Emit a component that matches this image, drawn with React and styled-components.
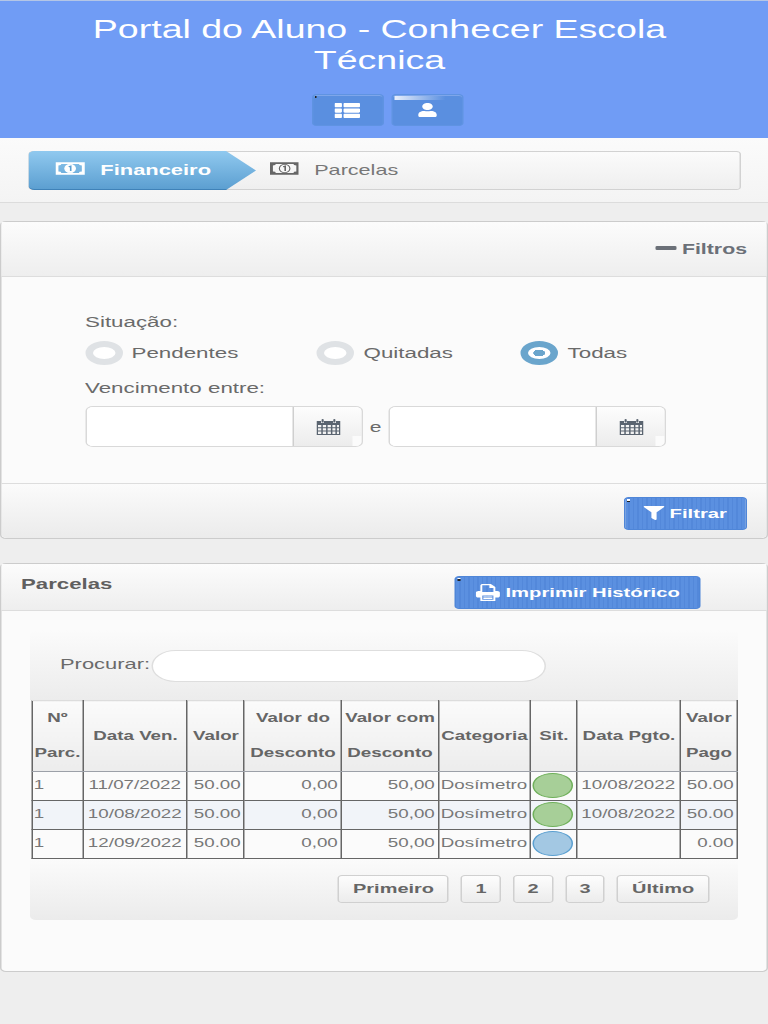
import React from "react";
import styled, { createGlobalStyle } from "styled-components";
import { FaThList, FaUser, FaFilter } from "react-icons/fa";

const rows = [
  { venc: "11/07/2022", sit: "paid", pgto: "10/08/2022", pago: "50.00" },
  { venc: "10/08/2022", sit: "paid", pgto: "10/08/2022", pago: "50.00" },
  { venc: "12/09/2022", sit: "open", pgto: "", pago: "0.00" },
];

const colWidths = [34.7, 69.3, 38, 64.7, 64.7, 61.3, 31.3, 68.7, 38];

const MoneyIcon = ({ color, face, digit }) => (
  <MoneySvg viewBox="0 0 20 13">
    <path
      fill={color}
      fillRule="evenodd"
      d="M0 0h20v13H0z M4 2 Q4 3.500 2 3.500 V9.500 Q4 9.500 4 11 H16 Q16 9.500 18 9.500 V3.500 Q16 3.500 16 2z"
    />
    <ellipse cx="10" cy="6.500" rx="3.600" ry="4.200" fill={face} stroke={color} strokeWidth="0.8" />
    <path d="M9 4.800 L10.400 4.100 V9" stroke={digit} strokeWidth="1.100" fill="none" />
  </MoneySvg>
);

const CalendarIcon = () => (
  <CalSvg viewBox="0 0 16 16">
    <path
      fill="#5a6470"
      fillRule="evenodd"
      d="M0 2h3v2h2V2h6v2h2V2h3v14H0z M1 6v2.200h2.200V6z M4.200 6v2.200h2.200V6z M7.400 6v2.200h2.200V6z M10.600 6v2.200h2V6z M13.600 6v2.200H15V6z M1 9.200v2.200h2.200V9.200z M4.200 9.200v2.200h2.200V9.200z M7.400 9.200v2.200h2.200V9.200z M10.600 9.200v2.200h2V9.200z M13.600 9.200v2.200H15V9.200z M1 12.400V15h2.200v-2.600z M4.200 12.400V15h2.200v-2.600z M7.400 12.400V15h2.200v-2.600z M10.600 12.400V15h2v-2.600z M13.600 12.400V15H15v-2.600z"
    />
    <rect x="3.400" y="0" width="1.400" height="3.600" rx="0.700" fill="#5a6470" />
    <rect x="11.200" y="0" width="1.400" height="3.600" rx="0.700" fill="#5a6470" />
  </CalSvg>
);

const PrinterIcon = () => (
  <PrintSvg viewBox="0 0 16 17">
    <path
      fill="#fff"
      fillRule="evenodd"
      d="M3 7V1.500C3 .7 3.700 0 4.500 0H10l3 3v4h1.200C15.200 7 16 7.800 16 8.800V12c0 .8-.7 1.500-1.500 1.500H13V17H3v-3.500H1.500C.7 13.500 0 12.800 0 12V8.800C0 7.800.8 7 1.800 7z M4.300 1.300V8H11.700V4H9V1.300z M4.300 11.500V15.700H11.700V11.500z"
    />
    <path d="M5 13h6M5 14.500h6" stroke="#fff" strokeWidth="0.8" />
  </PrintSvg>
);

const Radio = ({ label, checked, width }) => (
  <RadioItem $width={width}>
    <RadioMark $checked={checked} />
    <span>{label}</span>
  </RadioItem>
);

const DateInput = () => (
  <InputGroup>
    <DateField />
    <Addon>
      <CalendarIcon />
    </Addon>
  </InputGroup>
);

export default function App() {
  return (
    <Page>
      <GlobalStyle />
      <Canvas>
        <Header>
          <Title>Portal do Aluno - Conhecer Escola Técnica</Title>
          <HeaderButtons>
            <HeaderButton>
              <FaThList size={17} />
            </HeaderButton>
            <HeaderButton $strip>
              <FaUser size={14} />
            </HeaderButton>
          </HeaderButtons>
        </Header>

        <CrumbBar>
          <Crumbs>
            <ActiveCrumb>
              <MoneyIcon color="#fff" face="#fff" digit="#5c9fd1" />
              Financeiro
            </ActiveCrumb>
            <Crumb>
              <MoneyIcon color="#666" face="#f7f7f7" digit="#666" />
              Parcelas
            </Crumb>
          </Crumbs>
        </CrumbBar>

        <FilterPanel>
          <FilterHead>
            <Dash />
            Filtros
          </FilterHead>
          <FilterBody>
            <FieldLabel>Situação:</FieldLabel>
            <RadioRow>
              <Radio label="Pendentes" width={154.7} />
              <Radio label="Quitadas" width={136} />
              <Radio label="Todas" checked />
            </RadioRow>
            <DateLabel>Vencimento entre:</DateLabel>
            <DateRow>
              <DateInput />
              <Between>e</Between>
              <DateInput />
            </DateRow>
          </FilterBody>
          <FilterFoot>
            <BlueButton $width={82}>
              <FaFilter size={14} />
              Filtrar
            </BlueButton>
          </FilterFoot>
        </FilterPanel>

        <ListPanel>
          <ListHead>
            <ListTitle>Parcelas</ListTitle>
            <BlueButton $width={164}>
              <PrinterIcon />
              Imprimir Histórico
            </BlueButton>
          </ListHead>
          <ListBody>
            <SearchBar>
              <SearchLabel>Procurar:</SearchLabel>
              <SearchInput />
            </SearchBar>
            <Table>
              <colgroup>
                {colWidths.map((w, i) => (
                  <col key={i} style={{ width: w }} />
                ))}
              </colgroup>
              <thead>
                <tr>
                  <Th>Nº<br />Parc.</Th>
                  <Th>Data Ven.</Th>
                  <Th>Valor</Th>
                  <Th>Valor do<br />Desconto</Th>
                  <Th>Valor com<br />Desconto</Th>
                  <Th>Categoria</Th>
                  <Th>Sit.</Th>
                  <Th>Data Pgto.</Th>
                  <Th>Valor<br />Pago</Th>
                </tr>
              </thead>
              <tbody>
                {rows.map((r, i) => (
                  <Row key={i} $alt={i === 1}>
                    <Td>1</Td>
                    <Td $align="center">{r.venc}</Td>
                    <Td $align="right">50.00</Td>
                    <Td $align="right">0,00</Td>
                    <Td $align="right">50,00</Td>
                    <Td>Dosímetro</Td>
                    <Td $align="center">
                      <Status $sit={r.sit} />
                    </Td>
                    <Td $align="center">{r.pgto}</Td>
                    <Td $align="right">{r.pago}</Td>
                  </Row>
                ))}
              </tbody>
            </Table>
            <Pager>
              <PageButton $width={74}>Primeiro</PageButton>
              <PageButton $width={26.7}>1</PageButton>
              <PageButton $width={26.7}>2</PageButton>
              <PageButton $width={26.7}>3</PageButton>
              <PageButton $width={61.3}>Último</PageButton>
            </Pager>
          </ListBody>
        </ListPanel>
      </Canvas>
    </Page>
  );
}

const GlobalStyle = createGlobalStyle`
  html, body {
    margin: 0;
    padding: 0;
    background: #eeeeee;
    overflow: hidden;
  }
  * {
    box-sizing: border-box;
  }
`;

const Page = styled.div`
  width: 768px;
  height: 1024px;
  overflow: hidden;
  background: #eeeeee;
`;

/* the whole page is photographed stretched sideways, so everything in here is 512 wide */
const Canvas = styled.div`
  width: 512px;
  transform: scale(1.5, 1);
  transform-origin: 0 0;
  font-family: "Liberation Sans", Arial, sans-serif;
  color: #666;
`;

const Header = styled.header`
  height: 138px;
  padding-top: 13px;
  background: #709cf5;
  border-top: 1px solid #b4c6e6;
  text-align: center;
`;

const Title = styled.h1`
  margin: 0 auto;
  width: 420px;
  padding-right: 6px;
  font-size: 25px;
  line-height: 31px;
  font-weight: 400;
  color: #fff;
`;

const HeaderButtons = styled.div`
  display: flex;
  justify-content: center;
  gap: 5px;
  margin-top: 18px;
  padding-left: 4px;
`;

const HeaderButton = styled.button`
  position: relative;
  display: flex;
  align-items: center;
  justify-content: center;
  width: 48px;
  height: 32px;
  padding: 0;
  border: 1px solid #5f93e2;
  border-radius: 3px;
  background: #5a8fe0;
  box-shadow: inset 0 1px 0 #7ea6ea;
  color: #fff;
  &::before {
    content: "";
    position: absolute;
    top: 1px;
    left: 1px;
    width: ${(p) => (p.$strip ? "34px" : "1px")};
    height: ${(p) => (p.$strip ? "4px" : "2px")};
    background: ${(p) =>
      p.$strip ? "linear-gradient(90deg, #e8effb, #5a8fe0)" : "#222"};
  }
`;

const CrumbBar = styled.div`
  height: 65px;
  padding: 13px 18.7px 0;
  background: linear-gradient(#fbfbfb, #f4f4f4);
  border-bottom: 1px solid #dcdcdc;
`;

const Crumbs = styled.div`
  display: flex;
  align-items: center;
  width: 475px;
  height: 39px;
  background: linear-gradient(#fbfbfb, #efefef);
  border: 1px solid #d2d2d2;
  border-radius: 3px;
  font-size: 14.4px;
`;

const ActiveCrumb = styled.div`
  display: flex;
  align-items: center;
  gap: 10px;
  width: 152px;
  height: 39px;
  margin: -1px 0 -1px -1px;
  padding-left: 18.7px;
  background: linear-gradient(#90c9ef, #5c9fd1);
  border-bottom: 1px solid #3f82b8;
  border-radius: 4px 0 0 4px;
  clip-path: polygon(0 0, 132px 0, 100% 50%, 132px 100%, 0 100%);
  color: #fff;
  font-size: 14.6px;
  font-weight: 700;
`;

const Crumb = styled.div`
  display: flex;
  align-items: center;
  gap: 10px;
  margin-top: -1px;
  padding-left: 9.300px;
  color: #777;
`;

const MoneySvg = styled.svg`
  width: 19.500px;
  height: 13px;
  margin-top: -3px;
`;

const Panel = styled.section`
  background: #fbfbfb;
  border: 1px solid #cccccc;
  border-radius: 4px;
`;

const FilterPanel = styled(Panel)`
  height: 318px;
  margin-top: 18px;
`;

const FilterHead = styled.div`
  display: flex;
  align-items: center;
  justify-content: flex-end;
  gap: 4px;
  height: 55px;
  padding: 0 13px 0 0;
  background: linear-gradient(#fcfcfc, #eeeeee);
  border-bottom: 1px solid #dddddd;
  font-size: 14.2px;
  font-weight: 700;
  color: #6b7078;
`;

const Dash = styled.span`
  width: 13.500px;
  height: 4px;
  margin-top: -2px;
  background: #6b7078;
  border-radius: 1px;
`;

const FilterBody = styled.div`
  height: 206px;
  padding: 34px 0 0 55.700px;
  font-size: 14.900px;
  color: #6a6a6a;
`;

const FieldLabel = styled.div`
  line-height: 22px;
`;

const RadioRow = styled.div`
  display: flex;
  margin-top: 8px;
`;

const RadioItem = styled.label`
  display: flex;
  align-items: center;
  gap: 6px;
  width: ${(p) => (p.$width ? `${p.$width}px` : "auto")};
  height: 24px;
`;

const RadioMark = styled.span`
  display: block;
  width: 25px;
  height: 24px;
  border-style: solid;
  border-width: 6px 5px;
  border-color: ${(p) => (p.$checked ? "#6aa5cc" : "#dfe2e5")};
  border-radius: 50%;
  background: ${(p) =>
    p.$checked
      ? "radial-gradient(ellipse 4px 3.500px, #6aa5cc 0 96%, #fff 100%)"
      : "#fff"};
`;

const DateLabel = styled(FieldLabel)`
  margin-top: 12px;
`;

const DateRow = styled.div`
  display: flex;
  align-items: center;
  margin-top: 7px;
`;

const InputGroup = styled.div`
  display: flex;
  width: 185.300px;
  height: 41px;
  background: #fff;
  border: 1px solid #d9d9d9;
  border-radius: 5px;
  overflow: hidden;
`;

const DateField = styled.input`
  flex: 1;
  min-width: 0;
  border: 0;
  outline: 0;
  background: #fff;
`;

const Addon = styled.div`
  position: relative;
  display: flex;
  align-items: center;
  justify-content: center;
  width: 45.700px;
  background: linear-gradient(#fdfdfd, #ececec);
  border-left: 1px solid #cfcfcf;
  &::after {
    content: "";
    position: absolute;
    right: 0;
    bottom: 0;
    width: 6px;
    height: 10px;
    background: #fbfbfb;
  }
`;

const CalSvg = styled.svg`
  width: 16px;
  height: 16px;
`;

const Between = styled.span`
  width: 16.700px;
  text-align: center;
  font-size: 14px;
`;

const FilterFoot = styled.div`
  display: flex;
  justify-content: flex-end;
  height: 55px;
  padding: 13px 13px 0 0;
  background: linear-gradient(#fbfbfb, #ebebeb);
  border-top: 1px solid #dddddd;
  border-radius: 0 0 4px 4px;
`;

const BlueButton = styled.button`
  position: relative;
  display: flex;
  align-items: center;
  justify-content: center;
  gap: 3px;
  flex: none;
  width: ${(p) => p.$width}px;
  height: 33px;
  padding: 0 0 1px;
  background: repeating-linear-gradient(90deg, #5b90e0 0 2px, #5388da 2px 3px);
  border: 1px solid #4f86d8;
  border-radius: 3px;
  color: #fff;
  font-family: inherit;
  font-size: 13.500px;
  font-weight: 700;
  &::before {
    content: "";
    position: absolute;
    top: 1px;
    left: 1px;
    width: 2px;
    height: 3px;
    background: linear-gradient(#fff 50%, #222 50%);
  }
`;

const PrintSvg = styled.svg`
  width: 16.500px;
  height: 17px;
`;

const ListPanel = styled(Panel)`
  height: 409px;
  margin-top: 24px;
`;

const ListHead = styled.div`
  display: flex;
  align-items: flex-start;
  justify-content: space-between;
  height: 47px;
  padding: 12px 43.700px 0 13px;
  background: linear-gradient(#fcfcfc, #eeeeee);
  border-bottom: 1px solid #dddddd;
`;

const ListTitle = styled.h2`
  margin: -1px 0 0;
  font-size: 14.800px;
  line-height: 18px;
  font-weight: 700;
  color: #5f5f5f;
`;

const ListBody = styled.div`
  padding: 19px 0 0 19px;
`;

const SearchBar = styled.div`
  display: flex;
  align-items: center;
  width: 472px;
  height: 70px;
  padding: 2px 0 0 20px;
  background: linear-gradient(#fbfbfb, #ececec);
  border-radius: 4px 4px 0 0;
`;

const SearchLabel = styled.label`
  width: 60.500px;
  margin-top: -4px;
  font-size: 14.600px;
  color: #6a6a6a;
`;

const SearchInput = styled.input`
  width: 263px;
  height: 32px;
  background: #fff;
  border: 1px solid #dedede;
  border-radius: 16px;
  outline: 0;
`;

const Table = styled.table`
  width: 471px;
  margin-left: 0.500px;
  border-collapse: collapse;
  table-layout: fixed;
  font-size: 12.500px;
`;

const Th = styled.th`
  height: 69px;
  padding: 0;
  background: linear-gradient(#fbfbfb, #ececec);
  border: 1px solid #666;
  border-top-color: #dddddd;
  border-bottom-color: #9ca0a8;
  line-height: 35px;
  font-weight: 700;
  color: #666;
  white-space: nowrap;
`;

const Row = styled.tr`
  background: ${(p) => (p.$alt ? "#f1f4f9" : "#fbfbfb")};
`;

const Td = styled.td`
  height: 29px;
  padding: 0 2px 2px 1px;
  border: 1px solid #666;
  text-align: ${(p) => p.$align || "left"};
  color: #777;
  white-space: nowrap;
`;

const Status = styled.span`
  display: block;
  width: 27.500px;
  height: 25px;
  margin-left: -0.500px;
  border: 1px solid ${(p) => (p.$sit === "paid" ? "#6fb05a" : "#5a9fd0")};
  border-radius: 50%;
  background: ${(p) => (p.$sit === "paid" ? "#a7cf98" : "#a3c8e3")};
`;

const Pager = styled.div`
  display: flex;
  justify-content: flex-end;
  gap: 8px;
  width: 472px;
  height: 61px;
  padding: 16px 19.300px 0 0;
  background: linear-gradient(#fbfbfb, #ebebeb);
  border-radius: 0 0 4px 4px;
`;

const PageButton = styled.button`
  width: ${(p) => p.$width}px;
  height: 28px;
  padding: 0 0 2px;
  background: linear-gradient(#fdfdfd, #ececec);
  border: 1px solid #d0d0d0;
  border-radius: 3px;
  font-family: inherit;
  font-size: 13.300px;
  font-weight: 700;
  color: #666;
`;
